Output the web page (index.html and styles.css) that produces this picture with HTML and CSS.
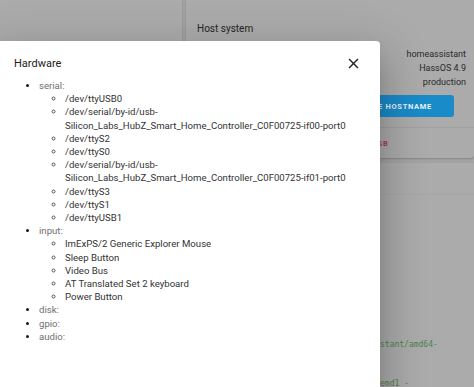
FILE: index.html
```html
<!DOCTYPE html>
<html lang="en">
<head>
  <meta charset="UTF-8">
  <meta name="viewport" content="width=device-width, initial-scale=1.0">
  <title>Supervisor - System</title>
  <link rel="stylesheet" href="styles.css">
</head>
<body>

  <!-- page behind the dialog (already dimmed) -->
  <div class="page">
    <div class="card side"></div>
    <div class="column">
      <div class="card host">
        <div class="card-title">Host system</div>
        <div class="info-row"><span>Hostname</span><span>homeassistant</span></div>
        <div class="info-row"><span>System</span><span>HassOS 4.9</span></div>
        <div class="info-row"><span>Channel</span><span>production</span></div>
        <div class="host-action">
          <button class="btn-blue">Change hostname</button>
        </div>
        <div class="card-actions">
          <span class="action">Reboot</span>
          <span class="action">Shutdown</span>
          <span class="action warn">Import from USB</span>
        </div>
      </div>
      <div class="card log">
        <div class="log-head"></div>
<pre class="log-text">INFO (MainThread) Setup supervisor
INFO (MainThread) Load config
INFO (MainThread) Host ready
INFO (supervisor.host) Update info
INFO (supervisor.os) Detect HassOS
INFO (supervisor.hw) Scan devices
INFO (supervisor.hw) USB attached
INFO (supervisor.api) Start API
INFO (supervisor.store) Load repos
INFO (supervisor.addons) Loaded 4
INFO (supervisor.docker) Pull homeassistant/amd64-
INFO (supervisor.docker) Done
INFO (supervisor.core) Running
INFO (supervisor.api) Starting update emd1 -</pre>
      </div>
    </div>
  </div>

  <!-- Hardware dialog -->
  <div class="dialog">
    <div class="dialog-head">
      <h2>Hardware</h2>
      <svg class="close" viewBox="0 0 24 24" width="17" height="17">
        <path d="M19,6.41L17.59,5L12,10.59L6.41,5L5,6.41L10.59,12L5,17.59L6.41,19L12,13.41L17.59,19L19,17.59L13.41,12L19,6.41Z"/>
      </svg>
    </div>
    <ul class="hw-list">
      <li><span class="key">serial:</span>
        <ul>
          <li>/dev/ttyUSB0</li>
          <li>/dev/serial/by-id/usb-Silicon_Labs_HubZ_Smart_Home_Controller_C0F00725-if00-port0</li>
          <li>/dev/ttyS2</li>
          <li>/dev/ttyS0</li>
          <li>/dev/serial/by-id/usb-Silicon_Labs_HubZ_Smart_Home_Controller_C0F00725-if01-port0</li>
          <li>/dev/ttyS3</li>
          <li>/dev/ttyS1</li>
          <li>/dev/ttyUSB1</li>
        </ul>
      </li>
      <li><span class="key">input:</span>
        <ul>
          <li>ImExPS/2 Generic Explorer Mouse</li>
          <li>Sleep Button</li>
          <li>Video Bus</li>
          <li>AT Translated Set 2 keyboard</li>
          <li>Power Button</li>
        </ul>
      </li>
      <li><span class="key">disk:</span></li>
      <li><span class="key">gpio:</span></li>
      <li><span class="key">audio:</span></li>
    </ul>
  </div>

</body>
</html>
```

FILE: styles.css
```css
* {
  box-sizing: border-box;
}

body {
  margin: 0;
  width: 474px;
  height: 387px;
  overflow: hidden;
  position: relative;
  background: #a4a4a4;
  font-family: Roboto, "Noto Sans", sans-serif;
  color: #2a2a2a;
}

/* background page */
.page {
  display: flex;
  gap: 4px;
  align-items: flex-start;
}

.card {
  background: #ababab;
  border-radius: 0 0 3px 3px;
  box-shadow: 0 1px 2px rgba(0, 0, 0, 0.18);
}

.card.side {
  width: 182px;
  height: 360px;
}

.column {
  flex: 1;
  display: flex;
  flex-direction: column;
  gap: 5px;
}

.host {
  padding: 22px 8px 0 11px;
}

.card-title {
  font-size: 10px;
  line-height: 14px;
  color: #262626;
  margin-bottom: 10.5px;
}

.info-row {
  display: flex;
  justify-content: space-between;
  font-size: 9px;
  line-height: 14px;
  color: #2a2a2a;
}

.host-action {
  display: flex;
  justify-content: flex-end;
  margin: 6.5px 12px 10px 0;
}

.btn-blue {
  height: 22px;
  padding: 0 22px;
  border: none;
  border-radius: 3px;
  background: #1a8bc9;
  color: #e6f2f9;
  font-family: Roboto, sans-serif;
  font-size: 7.5px;
  font-weight: 700;
  letter-spacing: 0.7px;
  text-transform: uppercase;
}

.card-actions {
  display: flex;
  align-items: center;
  gap: 16px;
  height: 31px;
  margin: 0 -8px 0 -11px;
  padding: 0 8px;
  border-top: 1px solid #a0a0a0;
}

.action {
  font-size: 7.5px;
  font-weight: 700;
  letter-spacing: 0.9px;
  text-transform: uppercase;
  color: #16719f;
}

.action.warn {
  color: #a83c48;
}

.log {
  height: 240px;
}

.log-head {
  height: 32px;
  border-bottom: 1px solid #a6a6a6;
}

.log-text {
  margin: 0;
  padding: 13px 11px 0;
  font-family: "DejaVu Sans Mono", monospace;
  font-size: 8px;
  line-height: 13px;
  color: #4a834a;
  white-space: pre;
}

/* dialog */
.dialog {
  position: absolute;
  left: -6px;
  top: 41px;
  width: 386px;
  height: 400px;
  padding: 14px 18px 0 20px;
  background: #fff;
  border-radius: 4px;
  box-shadow: 0 11px 15px -7px rgba(0, 0, 0, 0.2),
              0 24px 38px 3px rgba(0, 0, 0, 0.14),
              0 9px 46px 8px rgba(0, 0, 0, 0.12);
}

.dialog-head {
  display: flex;
  justify-content: space-between;
  align-items: center;
}

.dialog-head h2 {
  margin: 0;
  font-size: 11px;
  line-height: 16px;
  font-weight: 400;
  color: #212121;
}

.close {
  fill: #222;
}

.hw-list {
  margin: 7px 0 0;
  padding-left: 25px;
  font-size: 9.6px;
  line-height: 13.2px;
  color: #333;
}

.hw-list li::marker {
  color: #1a1a1a;
}

.hw-list ul {
  margin: 0;
  padding-left: 26px;
  list-style-type: circle;
}

.hw-list ul li::marker {
  color: #555;
}

.hw-list .key {
  color: #6f6f6f;
}
```
